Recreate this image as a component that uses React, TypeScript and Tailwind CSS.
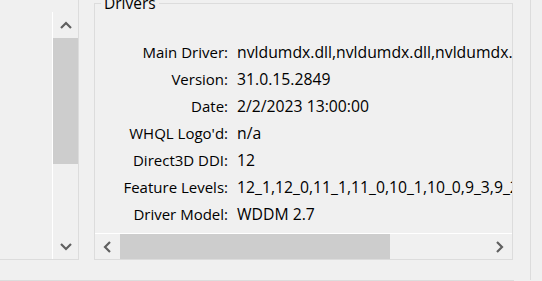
import React from 'react';

const rows: [string, string][] = [
  ['Main Driver:', 'nvldumdx.dll,nvldumdx.dll,nvldumdx.dll,nvldumdx.dll'],
  ['Version:', '31.0.15.2849'],
  ['Date:', '2/2/2023 13:00:00'],
  ["WHQL Logo'd:", 'n/a'],
  ['Direct3D DDI:', '12'],
  ['Feature Levels:', '12_1,12_0,11_1,11_0,10_1,10_0,9_3,9_2,9_1'],
  ['Driver Model:', 'WDDM 2.7'],
];

const Chevron: React.FC<{ dir: 'up' | 'down' | 'left' | 'right' }> = ({ dir }) => {
  const paths = {
    up: 'M1 7 L6 2 L11 7',
    down: 'M1 2 L6 7 L11 2',
    left: 'M7 1 L2 6 L7 11',
    right: 'M2 1 L7 6 L2 11',
  };
  const vertical = dir === 'up' || dir === 'down';
  return (
    <svg
      width={vertical ? 12 : 9}
      height={vertical ? 9 : 12}
      viewBox={vertical ? '0 0 12 9' : '0 0 9 12'}
      fill="none"
      stroke="#606060"
      strokeWidth={2.2}
    >
      <path d={paths[dir]} />
    </svg>
  );
};

const App: React.FC = () => {
  return (
    <div
      className="w-[542px] h-[281px] bg-[#f0f0f0] overflow-hidden text-black relative"
      style={{ fontFamily: '"Open Sans", "Liberation Sans", sans-serif' }}
    >
      <div className="flex h-[280px]">
        {/* left list with vertical scrollbar */}
        <div className="w-[79px] h-[260px] border-r border-b border-[#dcdcdc] flex shrink-0">
          <div className="flex-1" />
          <div className="w-[26px] mt-[12px] border-l border-white flex flex-col">
            <div className="h-[26px] flex items-center justify-center">
              <Chevron dir="up" />
            </div>
            <div className="h-[126px] bg-[#cdcdcd]" />
            <div className="flex-1" />
            <div className="h-[26px] flex items-center justify-center">
              <Chevron dir="down" />
            </div>
          </div>
        </div>

        {/* Drivers group */}
        <div className="ml-[15px] mt-[3px] w-[419px] h-[257px] border border-[#dcdcdc] relative flex flex-col shrink-0">
          <span className="absolute left-[6px] top-[-8px] px-[3px] bg-[#f0f0f0] text-[15.5px] leading-[15px]">
            Drivers
          </span>
          <div className="flex-1 overflow-hidden pt-[34px]">
            {rows.map(([label, value]) => (
              <div key={label} className="flex h-[27px] items-center whitespace-nowrap leading-[20px]">
                <span className="w-[133px] shrink-0 text-right text-[15px]">{label}</span>
                <span className="ml-[9px] text-[15.75px]">{value}</span>
              </div>
            ))}
          </div>
          <div className="h-[26px] border-t border-white flex items-stretch">
            <div className="w-[25px] flex items-center justify-center">
              <Chevron dir="left" />
            </div>
            <div className="w-[270px] bg-[#cdcdcd]" />
            <div className="flex-1" />
            <div className="w-[26px] flex items-center justify-center">
              <Chevron dir="right" />
            </div>
          </div>
        </div>

        <div className="ml-[17px] w-px h-full bg-[#dcdcdc]" />
      </div>
      <div className="w-[514px] h-px bg-[#dcdcdc]" />
    </div>
  );
};

export default App;
